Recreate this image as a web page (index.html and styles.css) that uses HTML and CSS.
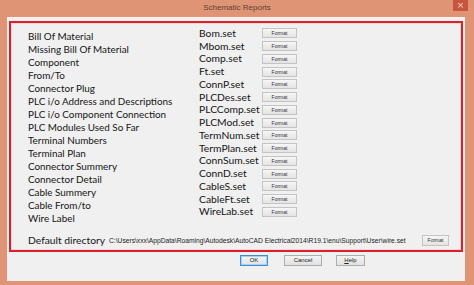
FILE: index.html
```html
<!DOCTYPE html>
<html>
<head>
<meta charset="utf-8">
<link rel="stylesheet" href="styles.css">
</head>
<body>
<div class="window">
  <div class="titlebar">
    <span class="title">Schematic Reports</span>
    <span class="close">×</span>
  </div>
  <div class="client">
    <div class="frame">
      <div class="main">
        <div class="labels">
          <div>Bill Of Material</div>
          <div>Missing Bill Of Material</div>
          <div>Component</div>
          <div>From/To</div>
          <div>Connector Plug</div>
          <div>PLC i/o Address and Descriptions</div>
          <div>PLC i/o Component Connection</div>
          <div>PLC Modules Used So Far</div>
          <div>Terminal Numbers</div>
          <div>Terminal Plan</div>
          <div>Connector Summery</div>
          <div>Connector Detail</div>
          <div>Cable Summery</div>
          <div>Cable From/to</div>
          <div>Wire Label</div>
        </div>
        <div class="sets">
          <div class="set"><span class="name">Bom.set</span><span class="fbtn">Format</span></div>
          <div class="set"><span class="name">Mbom.set</span><span class="fbtn">Format</span></div>
          <div class="set"><span class="name">Comp.set</span><span class="fbtn">Format</span></div>
          <div class="set"><span class="name">Ft.set</span><span class="fbtn">Format</span></div>
          <div class="set"><span class="name">ConnP.set</span><span class="fbtn">Format</span></div>
          <div class="set"><span class="name">PLCDes.set</span><span class="fbtn">Format</span></div>
          <div class="set"><span class="name">PLCComp.set</span><span class="fbtn">Format</span></div>
          <div class="set"><span class="name">PLCMod.set</span><span class="fbtn">Format</span></div>
          <div class="set"><span class="name">TermNum.set</span><span class="fbtn">Format</span></div>
          <div class="set"><span class="name">TermPlan.set</span><span class="fbtn">Format</span></div>
          <div class="set"><span class="name">ConnSum.set</span><span class="fbtn">Format</span></div>
          <div class="set"><span class="name">ConnD.set</span><span class="fbtn">Format</span></div>
          <div class="set"><span class="name">CableS.set</span><span class="fbtn">Format</span></div>
          <div class="set"><span class="name">CableFt.set</span><span class="fbtn">Format</span></div>
          <div class="set"><span class="name">WireLab.set</span><span class="fbtn">Format</span></div>
        </div>
      </div>
      <div class="dirrow">
        <span class="dirlabel">Default directory</span>
        <span class="path">C:\Users\xxx\AppData\Roaming\Autodesk\AutoCAD Electrical2014\R19.1\enu\Support\User\wire.set</span>
        <span class="fbtn dirbtn">Format</span>
      </div>
    </div>
    <div class="actions">
      <span class="btn ok">OK</span>
      <span class="btn cancel">Cancel</span>
      <span class="btn help"><u>H</u>elp</span>
    </div>
  </div>
</div>
</body>
</html>
```

FILE: styles.css
```css
html, body {
  margin: 0;
  padding: 0;
}
body {
  width: 474px;
  height: 285px;
  background: #df9476;
  overflow: hidden;
}
.window {
  width: 474px;
  height: 285px;
  display: flex;
  flex-direction: column;
  box-sizing: border-box;
}
.titlebar {
  height: 17px;
  display: flex;
  align-items: flex-start;
  justify-content: center;
  position: relative;
}
.title {
  font-family: "Liberation Sans", Arial, sans-serif;
  font-size: 8px;
  line-height: 16px;
  color: #5e4036;
}
.close {
  position: absolute;
  left: 453px;
  top: 0;
  width: 15px;
  height: 11px;
  background: #c9553f;
  color: #f3d8d0;
  font-family: "DejaVu Sans", sans-serif;
  font-size: 9px;
  line-height: 11px;
  text-align: center;
}
.client {
  margin: 0 9px 4px 7px;
  flex: 1;
  background: #f0f0f0;
  border-top: 1px solid #f8f2f0;
  display: flex;
  flex-direction: column;
  padding: 3px 2px 0 2px;
}
.frame {
  height: 227px;
  border: 2px solid #dc1f2b;
  box-shadow: inset 0 0 0 1px #f4d6d8;
  display: flex;
  flex-direction: column;
  font-family: "Lato", "Open Sans", sans-serif;
  color: #151515;
}
.main {
  display: flex;
  padding-left: 17px;
}
.labels {
  width: 171px;
  padding-top: 6.5px;
  font-size: 9.9px;
  line-height: 13px;
  white-space: nowrap;
}
.sets {
  padding-top: 4px;
  display: flex;
  flex-direction: column;
}
.set {
  height: 12.75px;
  display: flex;
  align-items: center;
}
.name {
  width: 63px;
  font-size: 10.3px;
  line-height: 13px;
  white-space: nowrap;
}
.fbtn {
  width: 33px;
  height: 8px;
  border: 1px solid #c4c4c4;
  background: linear-gradient(#f6f6f6, #e4e4e4);
  font-family: "Liberation Sans", Arial, sans-serif;
  font-size: 5px;
  line-height: 8px;
  text-align: center;
  color: #333;
}
.dirrow {
  margin-top: auto;
  height: 20px;
  display: flex;
  align-items: center;
  padding-left: 17px;
}
.dirlabel {
  width: 81px;
  font-size: 10.3px;
  white-space: nowrap;
}
.path {
  width: 313px;
  font-family: "Liberation Sans", Arial, sans-serif;
  font-size: 6.7px;
  white-space: nowrap;
  color: #222;
}
.dirbtn {
  width: 25px;
  height: 9px;
  line-height: 9px;
}
.actions {
  display: flex;
  padding-left: 231px;
  padding-top: 3px;
  font-family: "Liberation Sans", Arial, sans-serif;
  font-size: 6px;
}
.btn {
  height: 9px;
  line-height: 9px;
  border: 1px solid #adadad;
  background: linear-gradient(#f4f4f4, #e2e2e2);
  text-align: center;
  color: #222;
}
.ok {
  width: 26px;
  border-color: #3c8ed6;
  box-shadow: inset 0 0 0 1px #a8d0f0;
}
.cancel {
  width: 36px;
  margin-left: 16px;
}
.help {
  width: 27px;
  margin-left: 14px;
}
```
